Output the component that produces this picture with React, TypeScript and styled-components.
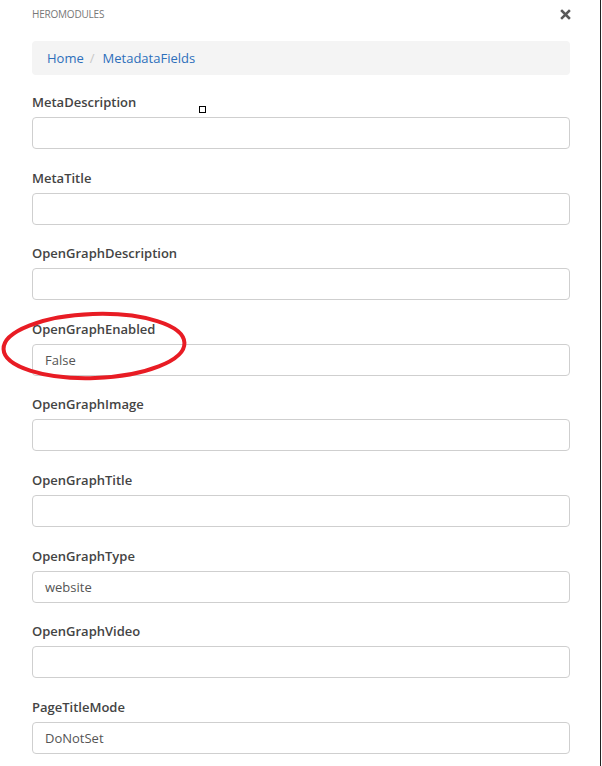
import React from "react";
import styled, { createGlobalStyle } from "styled-components";

const Global = createGlobalStyle`
  html, body { margin: 0; padding: 0; background: #fff; }
  body { font-family: "Open Sans", "Liberation Sans", sans-serif; }
  * { box-sizing: border-box; }
`;

const Page = styled.div`
  position: relative;
  width: 602px;
  height: 766px;
  overflow: hidden;
  background: #fff;
`;

const Panel = styled.div`
  width: 601px;
  height: 766px;
  border-right: 1px solid #222;
  padding: 0 30px 0 32px;
`;

const Header = styled.div`
  display: flex;
  align-items: center;
  justify-content: space-between;
  height: 26px;
  padding-top: 2px;
`;

const Title = styled.div`
  font-size: 10px;
  color: #777;
  letter-spacing: -0.2px;
`;

const Close = styled.button`
  border: 0;
  background: none;
  padding: 0;
  margin-right: -1px;
  display: flex;
  cursor: pointer;
`;

const Breadcrumb = styled.nav`
  margin-top: 15px;
  height: 34px;
  background: #f4f4f4;
  border-radius: 4px;
  display: flex;
  align-items: center;
  padding-left: 15px;
  font-size: 13px;
`;

const Crumb = styled.a`
  color: #2d6fbb;
  text-decoration: none;
`;

const Sep = styled.span`
  color: #c8c8c8;
  padding: 0 8px 0 6px;
`;

const Form = styled.div`
  margin-top: 18px;
`;

const Group = styled.div`
  margin-bottom: 19.6px;
`;

const Label = styled.label`
  display: block;
  font-size: 13px;
  line-height: 18px;
  font-weight: 600;
  color: #444;
  margin-bottom: 6px;
`;

const Input = styled.div`
  height: 32px;
  border: 1px solid #cfcfcf;
  border-radius: 4px;
  display: flex;
  align-items: center;
  padding-left: 12px;
  font-size: 13px;
  color: #555;
`;

const Handle = styled.div`
  position: absolute;
  left: 199px;
  top: 106px;
  width: 7px;
  height: 7px;
  border: 1px solid #000;
  background: #fff;
`;

const Annotation = styled.svg`
  position: absolute;
  left: 0;
  top: 300px;
  pointer-events: none;
`;

const fields: { name: string; value?: string }[] = [
  { name: "MetaDescription" },
  { name: "MetaTitle" },
  { name: "OpenGraphDescription" },
  { name: "OpenGraphEnabled", value: "False" },
  { name: "OpenGraphImage" },
  { name: "OpenGraphTitle" },
  { name: "OpenGraphType", value: "website" },
  { name: "OpenGraphVideo" },
  { name: "PageTitleMode", value: "DoNotSet" },
];

export default function App() {
  return (
    <Page>
      <Global />
      <Panel>
        <Header>
          <Title>HEROMODULES</Title>
          <Close aria-label="close">
            <svg width="11" height="11" viewBox="0 0 11 11">
              <path d="M2 2 L9 9 M9 2 L2 9" stroke="#5a5a5a" strokeWidth="2.5" strokeLinecap="square" />
            </svg>
          </Close>
        </Header>
        <Breadcrumb>
          <Crumb href="#">Home</Crumb>
          <Sep>/</Sep>
          <Crumb href="#">MetadataFields</Crumb>
        </Breadcrumb>
        <Form>
          {fields.map((f) => (
            <Group key={f.name}>
              <Label>{f.name}</Label>
              <Input>{f.value ?? ""}</Input>
            </Group>
          ))}
        </Form>
      </Panel>
      <Handle />
      <Annotation width="200" height="90" viewBox="0 0 200 90">
        <ellipse cx="94" cy="46" rx="90.5" ry="32" fill="none" stroke="#e81c24" strokeWidth="4" transform="rotate(-2 94 46)" />
      </Annotation>
    </Page>
  );
}
